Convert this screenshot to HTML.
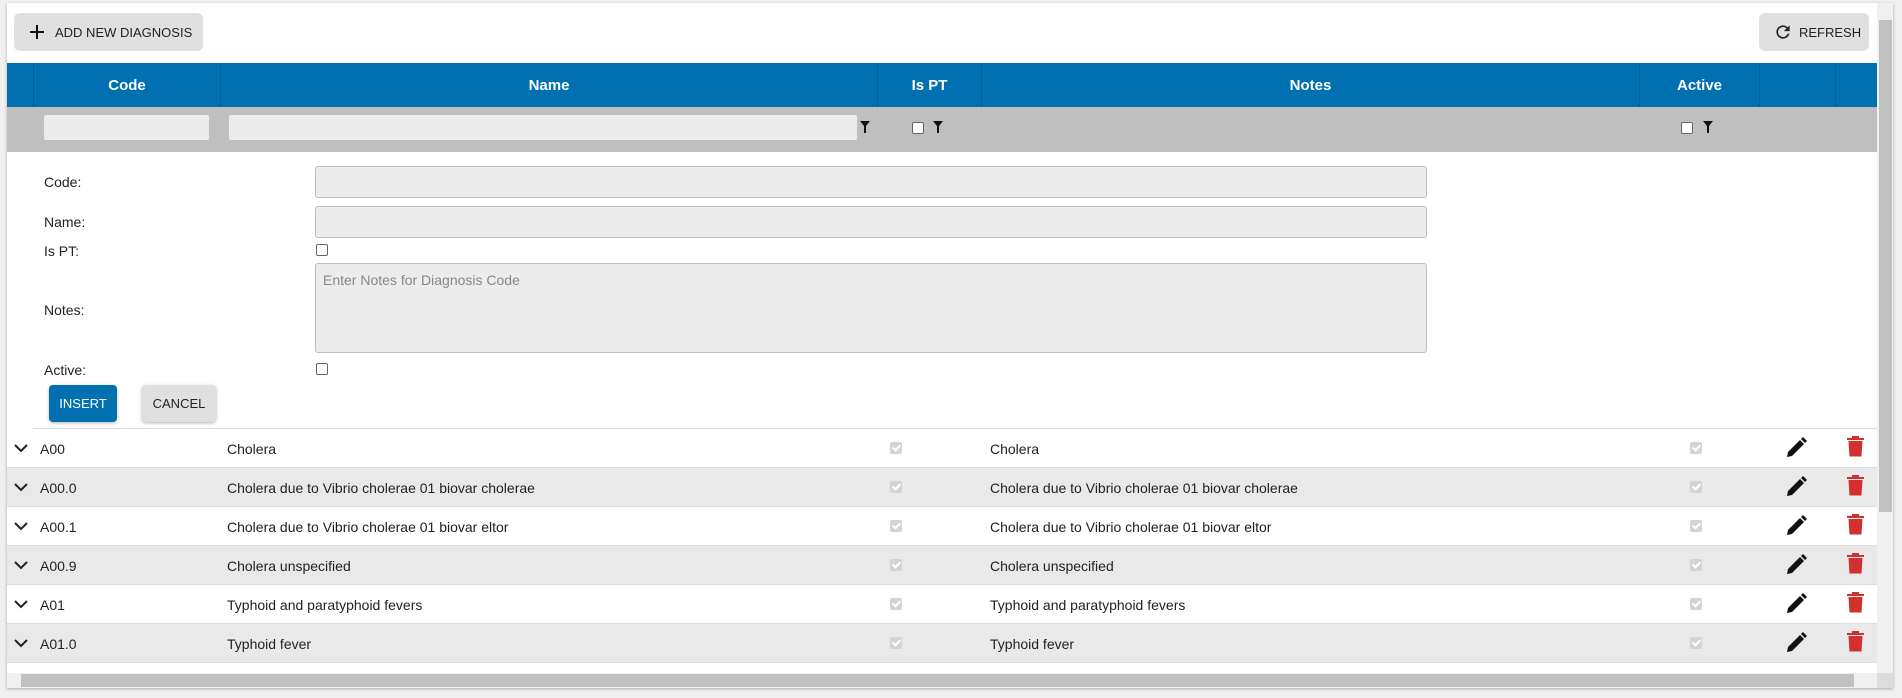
<!DOCTYPE html>
<html><head><style>
*{box-sizing:border-box;margin:0;padding:0}
body{width:1902px;height:698px;background:#f0f0f0;font-family:"Liberation Sans",Arial,sans-serif;position:relative;overflow:hidden;color:#222}
.a{position:absolute}
.card{left:7px;top:3px;width:1886px;height:685px;background:#fff;box-shadow:0 1px 3px rgba(0,0,0,.3)}
.btn{background:#e0e0e0;border-radius:6px;font-size:13px;display:flex;align-items:center;color:#222}
.hd{top:63px;height:44px;background:#0070b0;color:#fff;font-weight:bold;font-size:15px;display:flex;align-items:center;justify-content:center;border-right:1px solid #005f96}
.fi{background:#ececec;border-radius:2px}
.lbl{font-size:14px;color:#222}
.in{background:#ececec;border:1px solid #bdbdbd;border-radius:3px}
.cb{width:12px;height:12px;border:1px solid #666;border-radius:2px;background:#fff}
.row{left:7px;width:1870px;height:39px;border-bottom:1px solid #ddd;font-size:14px}
.row span{position:absolute;top:12px}
.dcb{position:absolute;top:13px;width:12px;height:12px;background:#d4d4d4;border-radius:2px}
.dcb:after{content:"";position:absolute;left:4px;top:1px;width:3px;height:6px;border:solid #fff;border-width:0 2px 2px 0;transform:rotate(45deg)}
</style></head><body>
<div class="a card"></div>
<div class="a btn" style="left:14px;top:13px;width:189px;height:38px;padding-left:14px">
<svg width="18" height="18" viewBox="0 0 18 18"><path d="M9 2v14M2 9h14" stroke="#111" stroke-width="2"/></svg><span style="margin-left:9px">ADD NEW DIAGNOSIS</span></div>
<div class="a btn" style="left:1759px;top:13px;width:110px;height:38px;padding-left:14px">
<svg width="20" height="20" viewBox="0 0 24 24"><path d="M17.65 6.35A7.96 7.96 0 0 0 12 4a8 8 0 1 0 7.73 10h-2.08A6 6 0 1 1 12 6c1.66 0 3.140.69 4.220 1.78L13 11h7V4l-2.35 2.35z" fill="#222"/></svg><span style="margin-left:6px">REFRESH</span></div>
<div class="a hd" style="left:7px;width:27px"></div>
<div class="a hd" style="left:34px;width:187px">Code</div>
<div class="a hd" style="left:221px;width:657px">Name</div>
<div class="a hd" style="left:878px;width:104px">Is PT</div>
<div class="a hd" style="left:982px;width:658px">Notes</div>
<div class="a hd" style="left:1640px;width:120px">Active</div>
<div class="a hd" style="left:1760px;width:76px"></div>
<div class="a hd" style="left:1836px;width:41px;border:0"></div>
<div class="a" style="left:7px;top:107px;width:1870px;height:45px;background:#bfbfbf"></div>
<div class="a fi" style="left:44px;top:115px;width:165px;height:25px"></div>
<div class="a fi" style="left:229px;top:115px;width:628px;height:25px"></div>
<svg class="a" style="left:860px;top:121px" width="10" height="12" viewBox="0 0 10 12"><path d="M0 0h10L6 5v7H4V5z" fill="#111"/></svg>
<div class="a cb" style="left:912px;top:122px"></div>
<svg class="a" style="left:933px;top:121px" width="10" height="12" viewBox="0 0 10 12"><path d="M0 0h10L6 5v7H4V5z" fill="#111"/></svg>
<div class="a cb" style="left:1681px;top:122px"></div>
<svg class="a" style="left:1703px;top:121px" width="10" height="12" viewBox="0 0 10 12"><path d="M0 0h10L6 5v7H4V5z" fill="#111"/></svg>
<div class="a lbl" style="left:44px;top:174px">Code:</div>
<div class="a in" style="left:315px;top:166px;width:1112px;height:32px"></div>
<div class="a lbl" style="left:44px;top:214px">Name:</div>
<div class="a in" style="left:315px;top:206px;width:1112px;height:32px"></div>
<div class="a lbl" style="left:44px;top:243px">Is PT:</div>
<div class="a cb" style="left:316px;top:244px"></div>
<div class="a in" style="left:315px;top:263px;width:1112px;height:90px;padding:8px 7px;font-size:14px;color:#888">Enter Notes for Diagnosis Code</div>
<div class="a lbl" style="left:44px;top:302px">Notes:</div>
<div class="a lbl" style="left:44px;top:362px">Active:</div>
<div class="a cb" style="left:316px;top:363px"></div>
<div class="a" style="left:49px;top:385px;width:68px;height:37px;background:#0070b0;border-radius:4px;color:#fff;font-size:13px;display:flex;align-items:center;justify-content:center;box-shadow:0 1px 3px rgba(0,0,0,.3)">INSERT</div>
<div class="a" style="left:142px;top:385px;width:74px;height:37px;background:#e0e0e0;border-radius:4px;font-size:13px;display:flex;align-items:center;justify-content:center;box-shadow:0 1px 3px rgba(0,0,0,.3)">CANCEL</div>
<div class="a" style="left:33px;top:428px;width:1844px;height:1px;background:#ddd"></div>
<svg width="0" height="0" style="position:absolute"><defs>
<g id="pen"><path d="M0 20l1-5L13 3l4 4L5 19z" fill="#111"/><path d="M14 2l2-2 4 4-2 2z" fill="#111"/></g>
<g id="tr"><rect x="0" y="2" width="17" height="2" fill="#d32f2f"/><rect x="5" y="0" width="7" height="3" fill="#d32f2f"/><path d="M1.5 5h14l-1 15.5h-12z" fill="#d32f2f"/></g>
<path id="chev" d="M1 1l6 6 6-6" stroke="#222" stroke-width="2" fill="none"/>
</defs></svg>
<div class="a row" style="top:429px;background:#fff"><svg class="a" style="left:7px;top:15px" width="14" height="9"><use href="#chev"/></svg><span style="left:33px">A00</span><span style="left:220px">Cholera</span><div class="dcb" style="left:883px"></div><span style="left:983px">Cholera</span><div class="dcb" style="left:1683px"></div><svg class="a" style="left:1780px;top:8px" width="21" height="21"><use href="#pen"/></svg><svg class="a" style="left:1840px;top:7px" width="17" height="21"><use href="#tr"/></svg></div>
<div class="a row" style="top:468px;background:#e9e9e9"><svg class="a" style="left:7px;top:15px" width="14" height="9"><use href="#chev"/></svg><span style="left:33px">A00.0</span><span style="left:220px">Cholera due to Vibrio cholerae 01 biovar cholerae</span><div class="dcb" style="left:883px"></div><span style="left:983px">Cholera due to Vibrio cholerae 01 biovar cholerae</span><div class="dcb" style="left:1683px"></div><svg class="a" style="left:1780px;top:8px" width="21" height="21"><use href="#pen"/></svg><svg class="a" style="left:1840px;top:7px" width="17" height="21"><use href="#tr"/></svg></div>
<div class="a row" style="top:507px;background:#fff"><svg class="a" style="left:7px;top:15px" width="14" height="9"><use href="#chev"/></svg><span style="left:33px">A00.1</span><span style="left:220px">Cholera due to Vibrio cholerae 01 biovar eltor</span><div class="dcb" style="left:883px"></div><span style="left:983px">Cholera due to Vibrio cholerae 01 biovar eltor</span><div class="dcb" style="left:1683px"></div><svg class="a" style="left:1780px;top:8px" width="21" height="21"><use href="#pen"/></svg><svg class="a" style="left:1840px;top:7px" width="17" height="21"><use href="#tr"/></svg></div>
<div class="a row" style="top:546px;background:#e9e9e9"><svg class="a" style="left:7px;top:15px" width="14" height="9"><use href="#chev"/></svg><span style="left:33px">A00.9</span><span style="left:220px">Cholera unspecified</span><div class="dcb" style="left:883px"></div><span style="left:983px">Cholera unspecified</span><div class="dcb" style="left:1683px"></div><svg class="a" style="left:1780px;top:8px" width="21" height="21"><use href="#pen"/></svg><svg class="a" style="left:1840px;top:7px" width="17" height="21"><use href="#tr"/></svg></div>
<div class="a row" style="top:585px;background:#fff"><svg class="a" style="left:7px;top:15px" width="14" height="9"><use href="#chev"/></svg><span style="left:33px">A01</span><span style="left:220px">Typhoid and paratyphoid fevers</span><div class="dcb" style="left:883px"></div><span style="left:983px">Typhoid and paratyphoid fevers</span><div class="dcb" style="left:1683px"></div><svg class="a" style="left:1780px;top:8px" width="21" height="21"><use href="#pen"/></svg><svg class="a" style="left:1840px;top:7px" width="17" height="21"><use href="#tr"/></svg></div>
<div class="a row" style="top:624px;background:#e9e9e9"><svg class="a" style="left:7px;top:15px" width="14" height="9"><use href="#chev"/></svg><span style="left:33px">A01.0</span><span style="left:220px">Typhoid fever</span><div class="dcb" style="left:883px"></div><span style="left:983px">Typhoid fever</span><div class="dcb" style="left:1683px"></div><svg class="a" style="left:1780px;top:8px" width="21" height="21"><use href="#pen"/></svg><svg class="a" style="left:1840px;top:7px" width="17" height="21"><use href="#tr"/></svg></div>
<div class="a" style="left:1877px;top:3px;width:16px;height:670px;background:#f0f0f0"></div>
<div class="a" style="left:1879px;top:20px;width:13px;height:492px;background:#c1c1c1"></div>
<div class="a" style="left:7px;top:673px;width:1870px;height:15px;background:#f0f0f0"></div>
<div class="a" style="left:21px;top:674px;width:1833px;height:13px;background:#c1c1c1"></div>
<div class="a" style="left:1877px;top:673px;width:16px;height:15px;background:#dcdcdc"></div>
</body></html>
